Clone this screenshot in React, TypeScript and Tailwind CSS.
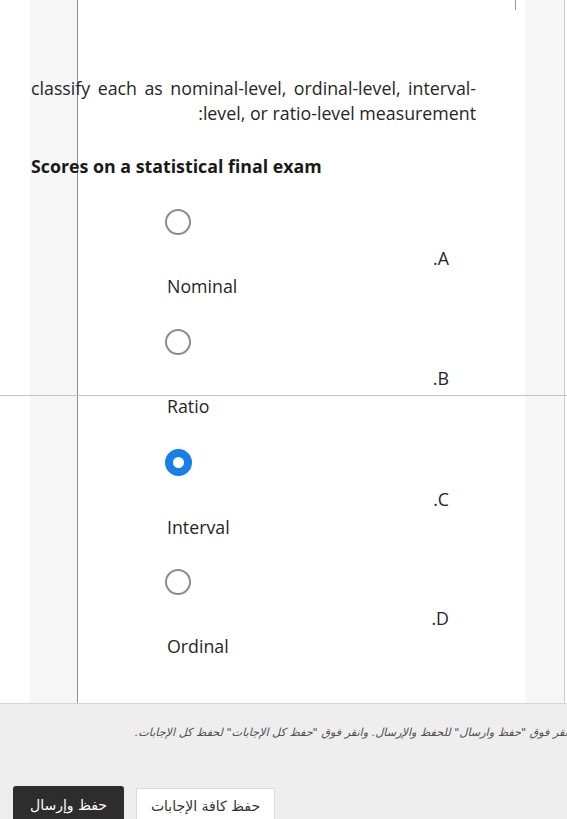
import React from "react";

type Opt = { letter: string; label: string; selected?: boolean };

const options: Opt[] = [
  { letter: "A.", label: "Nominal" },
  { letter: "B.", label: "Ratio" },
  { letter: "C.", label: "Interval", selected: true },
  { letter: "D.", label: "Ordinal" },
];

function Radio({ selected }: { selected?: boolean }) {
  if (selected) {
    return <div className="h-[27px] w-[27px] rounded-full border-[8px] border-[#1a7ee8] bg-white" />;
  }
  return <div className="h-[26px] w-[26px] rounded-full border-2 border-[#8c8c8c] bg-white" />;
}

export default function App() {
  return (
    <div className="relative h-[819px] w-[567px] overflow-hidden bg-white font-['Open_Sans',sans-serif] text-[#262626]">
      <div className="relative h-[703px]">
        <div className="absolute inset-0 flex" aria-hidden="true">
          <div className="w-[30px] bg-white" />
          <div className="w-[47px] bg-[#f6f6f6]" />
          <div className="w-px bg-[#8e8e8e]" />
          <div className="w-[447px] bg-white" />
          <div className="w-[39px] bg-[#f6f6f6]" />
          <div className="w-px bg-[#cfcfcf]" />
          <div className="flex-1 bg-white" />
        </div>
        <div className="absolute left-[515px] top-0 h-[10px] w-px bg-[#9a9a9a]" />

        <div className="relative pl-[31px] pt-[76px]">
          <p dir="rtl" className="w-[445px] text-justify text-[17.8px] leading-[25px]">
            classify each as nominal-level, ordinal-level, interval-level, or ratio-level measurement:
          </p>
          <h2 className="mt-[28px] text-[17.8px] font-bold leading-[25px] text-[#1a1a1a]">
            Scores on a statistical final exam
          </h2>
          <div className="mt-[30px] pl-[134px]">
            {options.map((o) => (
              <div key={o.letter} className="h-[120px]">
                <Radio selected={o.selected} />
                <div dir="rtl" className="mt-[11px] w-[284px] text-[17.8px] leading-[24px]">
                  {o.letter}
                </div>
                <div className="ml-[2px] mt-[4px] text-[17.8px] leading-[24px]">{o.label}</div>
              </div>
            ))}
          </div>
        </div>
        <div className="absolute left-0 right-0 top-[395px] h-px bg-[#c4c4c4]" />
      </div>

      <div className="h-[116px] border-t border-[#d6d6d6] bg-[#eeeeee]">
        <div
          dir="rtl"
          className="-mr-[4px] whitespace-nowrap pt-[19px] font-['DejaVu_Sans',sans-serif] text-[11.2px] italic leading-[20px] text-[#505050]"
        >
          انقر فوق "حفظ وارسال" للحفظ والإرسال. وانقر فوق "حفظ كل الإجابات" لحفظ كل الإجابات.
        </div>
        <div className="mt-[43px] flex items-start gap-[12px] pl-[13px] font-['DejaVu_Sans',sans-serif] text-[14px]">
          <div dir="rtl" className="h-[40px] w-[111px] rounded-[3px] bg-[#2d2d2d] pt-[9px] text-center leading-[20px] text-white">
            حفظ وإرسال
          </div>
          <div dir="rtl" className="mt-[2px] h-[40px] w-[139px] border border-[#dcdcdc] bg-white pt-[7px] text-center leading-[20px] text-[#333]">
            حفظ كافة الإجابات
          </div>
        </div>
      </div>
    </div>
  );
}
